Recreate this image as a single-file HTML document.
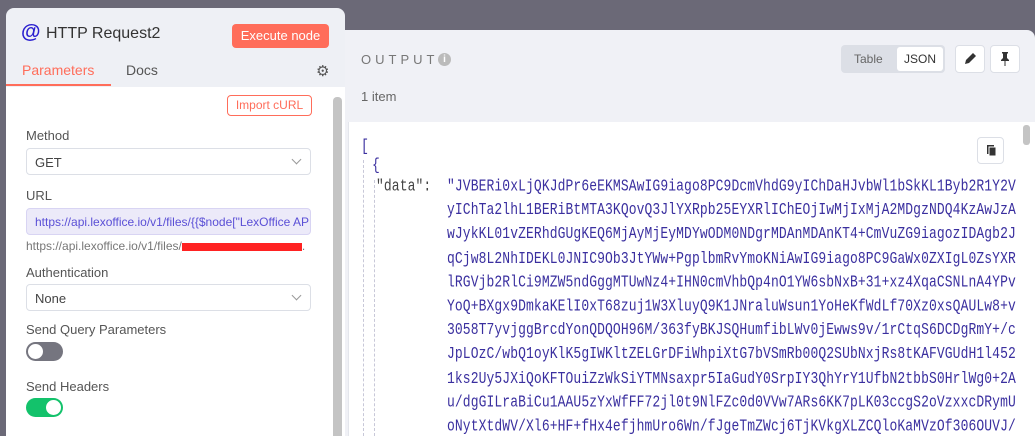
<!DOCTYPE html>
<html><head><meta charset="utf-8"><style>
*{box-sizing:border-box;margin:0;padding:0}
html,body{width:1035px;height:436px;overflow:hidden}
body{background:#6b6977;font-family:"Liberation Sans",sans-serif;position:relative}
.abs{position:absolute}
#right{left:340px;top:30px;width:695px;height:406px;background:#f0f1f6;border-top-right-radius:8px;overflow:hidden}
#left{left:6px;top:8px;width:339px;height:428px;background:#eef0f5;border-radius:8px 8px 0 0;overflow:hidden}
.lbl{position:absolute;left:20px;font-size:13px;color:#555}
.sel{position:absolute;left:20px;width:285px;height:27px;border:1px solid #dcdfe6;border-radius:4px;background:#fff;font-size:13px;color:#444;padding:6px 8px}
.chev{position:absolute;right:10px;top:7px;width:7px;height:7px;border-right:1px solid #999;border-bottom:1px solid #999;transform:rotate(45deg)}
.code{font-family:"Liberation Mono",monospace;font-size:13px;letter-spacing:0.1px;color:#3a2f9f;position:absolute;white-space:pre;line-height:19.2px;transform:scaleY(1.25);transform-origin:0 0}
.btn{position:absolute;background:#fff;border:1px solid #dcdfe6;border-radius:4px}
</style></head><body>
<div id="right" class="abs">
  <div class="abs" style="left:21px;top:22px;font-size:13px;letter-spacing:4px;color:#777">OUTPUT</div>
  <div class="abs" style="left:98px;top:23px;width:13px;height:13px;border-radius:50%;background:#bbb;color:#fff;font-size:10px;text-align:center;line-height:13px;font-weight:bold">i</div>
  <div class="abs" style="left:501px;top:15px;width:104px;height:28px;background:#dcdfe6;border-radius:4px"></div>
  <div class="abs" style="left:514px;top:22px;font-size:12px;color:#666">Table</div>
  <div class="abs" style="left:557px;top:17px;width:46px;height:24px;background:#fff;border-radius:3px;font-size:12px;color:#333;text-align:center;line-height:24px">JSON</div>
  <div class="btn" style="left:615px;top:15px;width:30px;height:28px"><svg width="28" height="26" viewBox="0 0 28 26"><path d="M9 18l1-4 7-7 3 3-7 7z" fill="#333"/></svg></div>
  <div class="btn" style="left:650px;top:15px;width:30px;height:28px"><svg width="28" height="26" viewBox="0 0 28 26"><path d="M11 6h6v1l-1 1v4l2 2v1h-8v-1l2-2V8l-1-1z" fill="#333"/><rect x="13.5" y="15" width="1" height="5" fill="#333"/></svg></div>
  <div class="abs" style="left:21px;top:59px;font-size:13px;color:#666">1 item</div>
  <div class="abs" style="left:8px;top:92px;width:687px;height:314px;background:#fff;border-left:1px solid #e4e6ec"></div>
  <div class="abs" style="left:683px;top:95px;width:7px;height:20px;background:#c4c4c4;border-radius:3px"></div>
  <div class="btn" style="left:637px;top:107px;width:27px;height:27px"><svg width="25" height="25" viewBox="0 0 25 25"><rect x="9" y="7" width="7" height="9" fill="#333"/><rect x="11" y="9" width="7" height="9" fill="#333" stroke="#fff" stroke-width="1"/></svg></div>
  <div class="abs" style="left:23px;top:130px;height:276px;border-left:1px dashed #c8c8d8"></div>
  <div class="abs" style="left:34px;top:150px;height:256px;border-left:1px dashed #c8c8d8"></div>
</div>
<div class="code" style="left:361px;top:134px">[</div>
<div class="code" style="left:372px;top:153px">{</div>
<div class="code" style="left:376px;top:174px;color:#444">"data":</div>
<div class="code" style="left:447px;top:174px;">"JVBERi0xLjQKJdPr6eEKMSAwIG9iago8PC9DcmVhdG9yIChDaHJvbWl1bSkKL1Byb2R1Y2V
yIChTa2lhL1BERiBtMTA3KQovQ3JlYXRpb25EYXRlIChEOjIwMjIxMjA2MDgzNDQ4KzAwJzA
wJykKL01vZERhdGUgKEQ6MjAyMjEyMDYwODM0NDgrMDAnMDAnKT4+CmVuZG9iagozIDAgb2J
qCjw8L2NhIDEKL0JNIC9Ob3JtYWw+PgplbmRvYmoKNiAwIG9iago8PC9GaWx0ZXIgL0ZsYXR
lRGVjb2RlCi9MZW5ndGggMTUwNz4+IHN0cmVhbQp4nO1YW6sbNxB+31+xz4XqaCSNLnA4YPv
YoQ+BXgx9DmkaKElI0xT68zuj1W3XluyQ9K1JNraluWsun1YoHeKfWdLf70Xz0xsQAULw8+v
3058T7yvjggBrcdYonQDQOH96M/363fyBKJSQHumfibLWv0jEwws9v/1rCtqS6DCDgRmY+/c
JpLOzC/wbQ1oyKlK5gIWKltZELGrDFiWhpiXtG7bVSmRb00Q2SUbNxjRs8tKAFVGUdH1l452
1ks2Uy5JXiQoKFTOuiZzWkSiYTMNsaxpr5IaGudY0SrpIY3QhYrY1UfbN2tbbS0HrlWg0+2A
u/dgGILraBiCu1AAU5zYxWfFF72jl0t9NlFZc0d0VVw7ARs6KK7pLK03ccgS2oVzxxcDRymU
oNytXtdWV/Xl6+HF+fHx4efjhmUro6Wn/fJgeTmZWcj6TjKVkgXLZCQloKaMVzOf306OUVJ/</div>

<div id="left" class="abs">
  <div class="abs" style="left:15px;top:13px;font-size:20px;font-weight:bold;color:#2a1fd0">@</div>
  <div class="abs" style="left:40px;top:17px;font-size:16px;color:#333">HTTP Request2</div>
  <div class="abs" style="left:226px;top:16px;width:97px;height:24px;background:#ff6d5a;border-radius:4px;color:#fff;font-size:13px;text-align:center;line-height:24px">Execute node</div>
  <div class="abs" style="left:16px;top:54px;font-size:14px;color:#ff6d5a">Parameters</div>
  <div class="abs" style="left:0;top:76px;width:105px;height:2px;background:#ff6d5a"></div>
  <div class="abs" style="left:120px;top:54px;font-size:14px;color:#555">Docs</div>
  <div class="abs" style="left:310px;top:54px;font-size:15px;color:#555">⚙</div>
  <div class="abs" style="left:0;top:79px;width:339px;height:349px;background:#fff;overflow:hidden">
    <div class="abs" style="left:327px;top:10px;width:9px;height:345px;background:#c4c4c4;border-radius:4px"></div>
    <div class="abs" style="left:221px;top:8px;width:85px;height:21px;border:1px solid #ff6d5a;border-radius:4px;color:#ff6d5a;font-size:12px;text-align:center;line-height:19px">Import cURL</div>
    <div class="lbl" style="top:41px">Method</div>
    <div class="sel" style="top:61px">GET<span class="chev"></span></div>
    <div class="lbl" style="top:101px">URL</div>
    <div class="sel" style="top:121px;background:#eceaf9;border-color:#d8d4f3;color:#5a4fd6;font-size:12px;overflow:hidden;white-space:nowrap">https://api.lexoffice.io/v1/files/{{$node["LexOffice AP</div>
    <div class="lbl" style="top:152px;font-size:12px;color:#777">https://api.lexoffice.io/v1/files/<span style="display:inline-block;width:120px;height:8px;background:#f22;vertical-align:middle"></span>.</div>
    <div class="lbl" style="top:178px">Authentication</div>
    <div class="sel" style="top:197px">None<span class="chev"></span></div>
    <div class="lbl" style="top:235px">Send Query Parameters</div>
    <div class="abs" style="left:20px;top:255px;width:37px;height:19px;border-radius:10px;background:#75757f"><div class="abs" style="left:2px;top:2px;width:15px;height:15px;border-radius:50%;background:#fff"></div></div>
    <div class="lbl" style="top:292px">Send Headers</div>
    <div class="abs" style="left:20px;top:311px;width:37px;height:19px;border-radius:10px;background:#13c26b"><div class="abs" style="left:20px;top:2px;width:15px;height:15px;border-radius:50%;background:#fff"></div></div>
  </div>
</div>
</body></html>
